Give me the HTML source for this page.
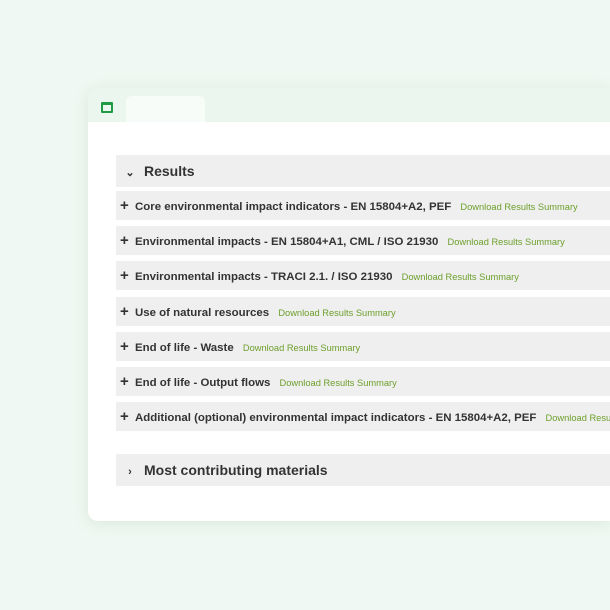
<!DOCTYPE html>
<html style="overflow:hidden"><head><style>
body{margin:0;width:610px;height:610px;background:#eff8f2;font-family:"Liberation Sans",sans-serif;overflow:hidden;position:relative}
.card{position:absolute;left:88px;top:88px;width:522px;height:433px;background:#fff;border-radius:10px 0 0 10px;box-shadow:0 2px 14px rgba(120,160,130,.18);overflow:hidden}
.top{position:absolute;left:0;top:0;right:0;height:34px;background:#eaf6ee}
.tab{position:absolute;left:38px;top:8px;width:79px;height:26px;background:#f8fcf9;border-radius:6px 6px 0 0}
.ico{position:absolute;left:13px;top:14px;width:8px;height:6px;border:2px solid #1f9a45;border-top-width:3px;border-radius:1px}
.hdr{position:absolute;left:28px;right:0;height:32px;background:#efefef;font-weight:bold;font-size:14px;color:#333;line-height:32px}
.row{position:absolute;left:28px;right:0;height:29px;background:#efefef;font-weight:bold;font-size:11.45px;color:#333;line-height:29px;white-space:nowrap;padding-left:4px;box-sizing:border-box;overflow:hidden}
.row b{font-size:15px;margin-right:3px;display:inline-block;width:12px}
.row a{font-weight:normal;font-size:9.3px;color:#6d9f2c;margin-left:6px}
</style></head><body>
<div class="card">
<div class="top"></div><div class="tab"></div><div class="ico"></div>
<div class="hdr" style="top:67px"><span style="display:inline-block;width:28px;text-align:center;font-size:11px">&#8964;</span>Results</div>
<div class="row" style="top:103px"><b>+</b>Core environmental impact indicators - EN 15804+A2, PEF <a>Download Results Summary</a></div>
<div class="row" style="top:138px"><b>+</b>Environmental impacts - EN 15804+A1, CML / ISO 21930 <a>Download Results Summary</a></div>
<div class="row" style="top:173px"><b>+</b>Environmental impacts - TRACI 2.1. / ISO 21930 <a>Download Results Summary</a></div>
<div class="row" style="top:209px"><b>+</b>Use of natural resources <a>Download Results Summary</a></div>
<div class="row" style="top:244px"><b>+</b>End of life - Waste <a>Download Results Summary</a></div>
<div class="row" style="top:279px"><b>+</b>End of life - Output flows <a>Download Results Summary</a></div>
<div class="row" style="top:314px"><b>+</b>Additional (optional) environmental impact indicators - EN 15804+A2, PEF <a>Download Results Summary</a></div>
<div class="hdr" style="top:366px"><span style="display:inline-block;width:28px;text-align:center;font-size:11px">&#8250;</span>Most contributing materials</div>
</div>
</body></html>
